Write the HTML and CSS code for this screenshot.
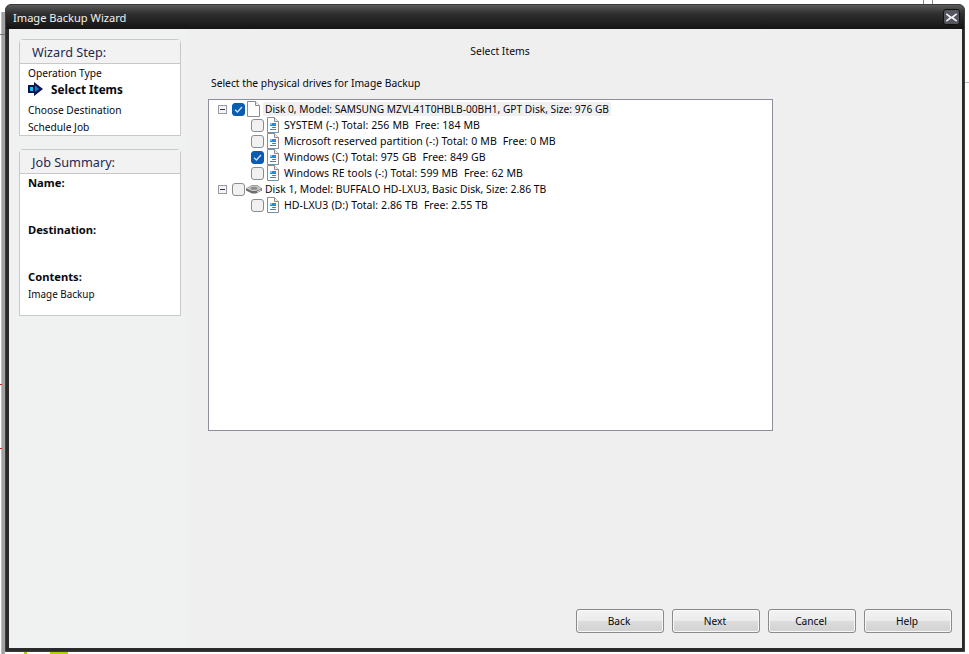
FILE: index.html
```html
<!DOCTYPE html>
<html lang="en">
<head>
<meta charset="utf-8">
<title>Image Backup Wizard</title>
<link rel="stylesheet" href="styles.css">
</head>
<body>
<svg class="defs" width="0" height="0" aria-hidden="true">
  <symbol id="doc" viewBox="0 0 12 16">
    <path d="M.5.5H7.500L11.500 4.500V15.500H.5Z" fill="#fff" stroke="#8b8b8b"/>
    <path d="M7.500.5V4.500H11.500" fill="#eee" stroke="#8b8b8b"/>
    <path d="M5 6H9V8H5ZM3 8H9V9H3ZM5 10H9V11H5ZM3 12H9V13H3Z" fill="#1890e8"/>
    <path d="M3 6H5V8H3Z" fill="#7cc4f4"/>
  </symbol>
  <symbol id="page" viewBox="0 0 13 16">
    <path d="M.5.5H8.500L12.500 4.500V15.500H.5Z" fill="#fff" stroke="#8b8b8b"/>
    <path d="M8.500.5V4.500H12.500" fill="#f2f2f2" stroke="#8b8b8b"/>
  </symbol>
  <symbol id="disk" viewBox="0 0 18 10">
    <path d="M1 4.500 7 1H12L17 4.500V6.500L11 9.500H7L1 6.500Z" fill="#6e6e6e"/>
    <path d="M1.500 4.500 7 1.500H12L16.500 4.500 11 7H7Z" fill="#c9c9c9"/>
    <ellipse cx="9" cy="4.200" rx="3.500" ry="1.500" fill="#8c8c8c"/>
    <path d="M12 8 16 6" stroke="#e4e4e4"/>
  </symbol>
  <symbol id="tick" viewBox="0 0 13 13">
    <path d="M3 6.800 5.400 9 10 4" fill="none" stroke="#cfe3f7" stroke-width="1.300"/>
  </symbol>
</svg>

<div class="edge edge-left"></div>
<div class="edge-mark mark-a"></div>
<div class="edge-mark mark-b"></div>
<div class="edge-mark mark-c"></div>
<div class="edge-mark mark-d"></div>
<div class="top-line line-a"></div>
<div class="top-line line-b"></div>
<div class="green-a"></div>
<div class="green-b"></div>

<main class="window">
  <header class="titlebar">
    <h1 class="title">Image Backup Wizard</h1>
    <button class="close" type="button" aria-label="Close">
      <svg width="15" height="12" viewBox="0 0 15 12"><path d="M2 1 7.500 5 13 1 14 2.500 9.800 6 14 9.500 13 11 7.500 7 2 11 1 9.500 5.200 6 1 2.500Z" fill="#f4f4fa"/></svg>
    </button>
  </header>
  <div class="client">
    <div class="body">
      <aside class="sidebar">
        <section class="panel panel-steps">
          <h2 class="panel-head">Wizard Step:</h2>
          <ul class="steps">
            <li class="step">Operation Type</li>
            <li class="step step-current">
              <svg class="step-icon" width="15" height="14" viewBox="0 0 15 14"><path d="M0 3H6V0L15 7 6 14V11H0Z" fill="#0c1450"/><path d="M2 5H5V9H2Z" fill="#12c4ee"/><path d="M7 3 11 7 7 10Z" fill="#1478c8"/></svg>
              Select Items
            </li>
            <li class="step">Choose Destination</li>
            <li class="step">Schedule Job</li>
          </ul>
        </section>
        <section class="panel panel-summary">
          <h2 class="panel-head">Job Summary:</h2>
          <dl class="summary">
            <dt class="summary-key">Name:</dt>
            <dd class="summary-value"></dd>
            <dt class="summary-key">Destination:</dt>
            <dd class="summary-value"></dd>
            <dt class="summary-key">Contents:</dt>
            <dd class="summary-text">Image Backup</dd>
          </dl>
        </section>
      </aside>
      <section class="content">
        <h2 class="content-title">Select Items</h2>
        <p class="content-label">Select the physical drives for Image Backup</p>
        <div class="tree">
          <div class="row row-disk">
            <span class="toggle"></span>
            <span class="check checked"><svg width="13" height="13"><use href="#tick"/></svg></span>
            <svg class="ico-page" width="13" height="16"><use href="#page"/></svg>
            <span class="label label-hi">Disk 0, Model: SAMSUNG MZVL41T0HBLB-00BH1, GPT Disk, Size: 976 GB</span>
          </div>
          <div class="row row-part">
            <span class="check"></span>
            <svg class="ico-doc" width="12" height="16"><use href="#doc"/></svg>
            <span class="label">SYSTEM (-:) Total: 256 MB&nbsp; Free: 184 MB</span>
          </div>
          <div class="row row-part">
            <span class="check"></span>
            <svg class="ico-doc" width="12" height="16"><use href="#doc"/></svg>
            <span class="label">Microsoft reserved partition (-:) Total: 0 MB&nbsp; Free: 0 MB</span>
          </div>
          <div class="row row-part">
            <span class="check checked"><svg width="13" height="13"><use href="#tick"/></svg></span>
            <svg class="ico-doc" width="12" height="16"><use href="#doc"/></svg>
            <span class="label">Windows (C:) Total: 975 GB&nbsp; Free: 849 GB</span>
          </div>
          <div class="row row-part">
            <span class="check"></span>
            <svg class="ico-doc" width="12" height="16"><use href="#doc"/></svg>
            <span class="label">Windows RE tools (-:) Total: 599 MB&nbsp; Free: 62 MB</span>
          </div>
          <div class="row row-disk">
            <span class="toggle"></span>
            <span class="check"></span>
            <svg class="ico-disk" width="18" height="10"><use href="#disk"/></svg>
            <span class="label label-disk">Disk 1, Model: BUFFALO HD-LXU3, Basic Disk, Size: 2.86 TB</span>
          </div>
          <div class="row row-part">
            <span class="check"></span>
            <svg class="ico-doc" width="12" height="16"><use href="#doc"/></svg>
            <span class="label">HD-LXU3 (D:) Total: 2.86 TB&nbsp; Free: 2.55 TB</span>
          </div>
        </div>
      </section>
    </div>
    <footer class="actions">
      <button class="btn" type="button">Back</button>
      <button class="btn" type="button">Next</button>
      <button class="btn" type="button">Cancel</button>
      <button class="btn" type="button">Help</button>
    </footer>
  </div>
</main>
</body>
</html>
```

FILE: styles.css
```css
* { box-sizing: border-box; }
html, body { margin: 0; height: 100%; }
body {
  position: relative;
  width: 969px;
  height: 654px;
  overflow: hidden;
  background: #fff;
  font-family: "Noto Sans", "Liberation Sans", sans-serif;
  font-size: 10.2px;
  color: #08080f;
  padding: 4px 0 0 5px;
}
.defs { position: absolute; }

.edge { position: absolute; background: linear-gradient(90deg, #d0d0d0, #9c9c9c 40%, #a8a8a8); }
.edge-left { left: 1px; top: 12px; width: 4px; height: 642px; }
.edge-mark { position: absolute; height: 1px; }
.mark-a { left: 0; top: 34px; width: 5px; background: #777; }
.mark-b { left: 0; top: 384px; width: 2px; background: #e81818; }
.mark-c { left: 0; top: 448px; width: 2px; background: #e81818; }
.mark-d { left: 965px; top: 82px; width: 4px; background: #bbb; }
.top-line { position: absolute; top: 0; width: 1px; height: 4px; background: #8d8d8d; }
.line-a { left: 923px; }
.line-b { left: 932px; }
.green-a { position: absolute; left: 24px; top: 652px; width: 3px; height: 2px; background: #b4cf00; }
.green-b { position: absolute; left: 50px; top: 652px; width: 18px; height: 2px; background: #b4cf00; }

.window {
  display: flex;
  flex-direction: column;
  width: 960px;
  height: 648px;
  background: #2a2a2a;
  border: 1px solid #3c3c3c;
  border-radius: 6px 6px 0 0;
  padding: 0 2px 3px 3px;
}
.titlebar {
  display: flex;
  align-items: center;
  justify-content: space-between;
  flex: none;
  height: 24px;
  margin: 0 -2px 0 -3px;
  padding: 0 4px 0 7px;
  border-radius: 5px 5px 0 0;
  background: linear-gradient(#5a5a5a, #303030 35%, #141414);
}
.title {
  margin: 0;
  font-size: 11.1px;
  font-weight: 400;
  color: #f2f2f2;
}
.close {
  display: flex;
  align-items: center;
  justify-content: center;
  width: 17px;
  height: 16px;
  padding: 0;
  border: 1px solid #111;
  border-radius: 3px;
  background: #55555f;
}
.close svg { width: 13px; height: 11px; }

.client {
  display: flex;
  flex: 1;
  flex-direction: column;
  min-height: 0;
  background: linear-gradient(90deg, #f0f1f1 179px, #efefef 179px);
}
.body { display: flex; flex: 1; min-height: 0; }

.sidebar {
  display: flex;
  flex: none;
  flex-direction: column;
  gap: 13px;
  width: 179px;
  padding: 10px 7px 0 10px;
}
.panel {
  background: #fff;
  border: 1px solid #c8c8c8;
  border-radius: 4px 4px 0 0;
}
.panel-steps { height: 97px; }
.panel-summary { height: 167px; }
.panel-head {
  height: 24px;
  margin: 0;
  padding-left: 12px;
  background: #f2f2f2;
  border-bottom: 1px solid #c8c8c8;
  font-size: 12.7px;
  font-weight: 400;
  line-height: 24px;
  color: #1e2a52;
}
.steps { margin: 0; padding: 0 0 0 8px; list-style: none; }
.step { display: flex; align-items: center; height: 17px; }
.step-current {
  gap: 8px;
  height: 20px;
  padding-bottom: 4px;
  font-weight: 700;
  font-size: 11.7px;
}
.step-icon { flex: none; }
.summary { margin: 0; padding: 0 8px; }
.summary-key { height: 17px; font-size: 11.2px; font-weight: 700; line-height: 17px; }
.summary-value { height: 30px; margin: 0; }
.summary-text { height: 17px; margin: 1px 0 0; font-size: 9.9px; line-height: 17px; }

.content { flex: none; width: 584px; margin-left: 20px; padding-top: 14px; }
.content-title {
  margin: 0;
  height: 16px;
  font-size: 10.4px;
  font-weight: 400;
  line-height: 16px;
  text-align: center;
}
.content-label { margin: 16px 0 0 3px; height: 16px; font-size: 10.3px; line-height: 16px; }
.tree {
  width: 565px;
  height: 332px;
  margin-top: 8px;
  padding: 1px 0 0;
  background: #fff;
  border: 1px solid #8e8e9e;
}
.row { display: flex; align-items: center; height: 16px; }
.row-disk { padding-left: 9px; }
.row-part { padding-left: 42px; font-size: 10.55px; word-spacing: 0.3px; }
.toggle {
  position: relative;
  flex: none;
  width: 9px;
  height: 9px;
  margin-right: 5px;
  border: 1px solid #9a9aa8;
  background: #f4f4f4;
}
.toggle::after {
  content: "";
  position: absolute;
  left: 1px;
  top: 3px;
  width: 5px;
  height: 1px;
  background: #33334a;
}
.check {
  flex: none;
  width: 13px;
  height: 13px;
  border: 1px solid #8c8c8c;
  border-radius: 3px;
  background: #f1f1f1;
}
.check svg { display: block; margin: -1px; }
.checked { border-color: #0a5cb0; background: #0a5cb0; }
.ico-page { flex: none; margin: 0 3px 0 2px; }
.ico-doc { flex: none; margin: 0 5px 0 3px; }
.ico-disk { flex: none; margin-right: 2px; margin-left: 0; }
.label { white-space: nowrap; line-height: 14px; }
.label-hi { padding: 0 2px; background: #f0f0f0; }
.label-disk { font-size: 10.35px; }

.actions {
  display: flex;
  flex: none;
  justify-content: flex-end;
  gap: 8px;
  padding: 0 10px 15px 0;
}
.btn {
  width: 88px;
  height: 24px;
  padding: 0 2px 0 0;
  border: 1px solid #8a8a8a;
  border-radius: 3px;
  background: linear-gradient(#f3f3f3, #ebebeb 48%, #dcdcdc 52%, #d2d2d2);
  box-shadow: inset 0 0 0 1px #f8f8f8;
  font: inherit;
  color: #08080f;
}
```
